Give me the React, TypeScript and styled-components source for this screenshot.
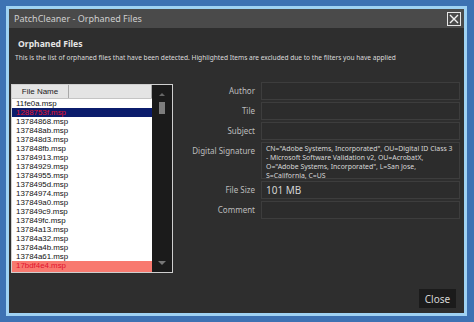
import React from "react";
import styled, { createGlobalStyle } from "styled-components";

const GlobalStyle = createGlobalStyle`
  html, body {
    margin: 0;
    padding: 0;
    background: #3d72b3;
    width: 474px;
    height: 322px;
    overflow: hidden;
  }
  * { box-sizing: border-box; }
`;

const Window = styled.div`
  margin: 6px 0 0 6px;
  width: 461px;
  height: 310px;
  border: 3px solid #9fd2f3;
  background: #2e2e2e;
  display: flex;
  flex-direction: column;
  font-family: "Noto Sans", "Open Sans", sans-serif;
`;

const TitleBar = styled.div`
  height: 19px;
  background: #4a4a4a;
  display: flex;
  align-items: center;
  justify-content: space-between;
  padding: 0 3px 0 5px;
  color: #cfcfcf;
  font-size: 9px;
`;

const CloseX = styled.div`
  width: 14px;
  height: 14px;
  border: 1px solid #e6e6e6;
  display: flex;
  align-items: center;
  justify-content: center;
`;

const Body = styled.div`
  flex: 1;
  display: flex;
  flex-direction: column;
  padding-top: 10px;
`;

const Heading = styled.div`
  font-weight: bold;
  font-size: 8.6px;
  line-height: 12px;
  color: #e6e6e6;
  padding-left: 9px;
`;

const Subtitle = styled.div`
  font-size: 6.6px;
  line-height: 10px;
  color: #dcdcdc;
  margin-top: 3px;
  padding-left: 6px;
  white-space: nowrap;
`;

const Main = styled.div`
  display: flex;
  margin-top: 19px;
  padding-left: 2px;
`;

const ListBox = styled.div`
  width: 162px;
  height: 189px;
  margin-top: 2px;
  border: 1px solid #cfcfcf;
  background: #fff;
  display: flex;
  overflow: hidden;
`;

const ListInner = styled.div`
  flex: 1;
  display: flex;
  flex-direction: column;
  overflow: hidden;
`;

const HeaderRow = styled.div`
  height: 14px;
  display: flex;
  background: #e4e4e4;
  border-bottom: 1px solid #c4c4c4;
  flex-shrink: 0;
`;

const HeaderCell = styled.div<{ $w?: number }>`
  width: ${p => (p.$w ? `${p.$w}px` : "auto")};
  flex: ${p => (p.$w ? "none" : 1)};
  border-right: 1px solid #a8a8a8;
  font-family: "Liberation Sans", Arial, sans-serif;
  font-size: 8px;
  color: #222;
  display: flex;
  align-items: center;
  justify-content: center;
`;

const Row = styled.div<{ $kind?: "sel" | "excl" }>`
  height: 9px;
  flex-shrink: 0;
  padding-left: 4px;
  font-family: "Liberation Sans", Arial, sans-serif;
  font-size: 7.9px;
  line-height: 9px;
  white-space: nowrap;
  color: ${p => (p.$kind ? "#e3122e" : "#111")};
  background: ${p =>
    p.$kind === "sel" ? "#0b1c6c" : p.$kind === "excl" ? "#f8796f" : "transparent"};
`;

const ScrollBar = styled.div`
  width: 20px;
  background: #1b1b1b;
  display: flex;
  flex-direction: column;
  align-items: center;
  padding-top: 8px;
  position: relative;
`;

const Thumb = styled.div`
  width: 6px;
  height: 12px;
  background: #7d7d7d;
  margin-top: 6px;
`;

const DownArrow = styled.div`
  position: absolute;
  bottom: 7px;
  left: 6px;
  width: 0;
  height: 0;
  border-left: 4px solid transparent;
  border-right: 4px solid transparent;
  border-top: 4px solid #777;
`;

const UpArrow = styled.div`
  width: 0;
  height: 0;
  border-left: 3.5px solid transparent;
  border-right: 3.5px solid transparent;
  border-bottom: 3.5px solid #666;
`;

const Props = styled.div`
  display: grid;
  grid-template-columns: 80px 199px;
  column-gap: 6px;
  row-gap: 2px;
  margin-left: 2px;
  align-content: start;
`;

const Label = styled.div`
  text-align: right;
  font-size: 8px;
  line-height: 18px;
  color: #bdbdbd;
  white-space: nowrap;
`;

const Field = styled.div<{ $h?: number }>`
  height: ${p => p.$h ?? 18}px;
  border: 1px solid #3d3d3d;
  background: #2c2c2c;
  color: #d4d4d4;
  padding: 0 4px;
  display: flex;
  align-items: center;
  font-size: 10px;
`;

const SigField = styled(Field)`
  display: block;
  padding: 1px 4px 0;
  font-size: 6.9px;
  line-height: 9px;
  white-space: nowrap;
  color: #d8d8d8;
`;

const Footer = styled.div`
  margin-top: auto;
  display: flex;
  justify-content: flex-end;
  padding: 0 8px 5px 0;
`;

const CloseButton = styled.button`
  width: 37px;
  height: 19px;
  background: #1b1b1b;
  border: none;
  color: #d6d6d6;
  font-family: "Noto Sans", "Open Sans", sans-serif;
  font-size: 10px;
  padding: 0;
`;

const files: { name: string; kind?: "sel" | "excl" }[] = [
  { name: "11fe0a.msp" },
  { name: "1288753f.msp", kind: "sel" },
  { name: "13784868.msp" },
  { name: "137848ab.msp" },
  { name: "137848d3.msp" },
  { name: "137848fb.msp" },
  { name: "13784913.msp" },
  { name: "13784929.msp" },
  { name: "13784955.msp" },
  { name: "1378495d.msp" },
  { name: "13784974.msp" },
  { name: "137849a0.msp" },
  { name: "137849c9.msp" },
  { name: "137849fc.msp" },
  { name: "13784a13.msp" },
  { name: "13784a32.msp" },
  { name: "13784a4b.msp" },
  { name: "13784a61.msp" },
  { name: "17bdf4e4.msp", kind: "excl" },
  { name: "17bdf4e5.msp", kind: "excl" },
];

export default function App() {
  return (
    <>
      <GlobalStyle />
      <Window>
        <TitleBar>
          <span>PatchCleaner - Orphaned Files</span>
          <CloseX>
            <svg width="10" height="10" viewBox="0 0 10 10">
              <path d="M1 1 L9 9 M9 1 L1 9" stroke="#f0f0f0" strokeWidth="1.4" />
            </svg>
          </CloseX>
        </TitleBar>
        <Body>
          <Heading>Orphaned Files</Heading>
          <Subtitle>
            This is the list of orphaned files that have been detected. Highlighted Items are excluded due to the filters you have applied
          </Subtitle>
          <Main>
            <ListBox>
              <ListInner>
                <HeaderRow>
                  <HeaderCell $w={57}>File Name</HeaderCell>
                  <HeaderCell />
                </HeaderRow>
                {files.map(f => (
                  <Row key={f.name} $kind={f.kind}>{f.name}</Row>
                ))}
              </ListInner>
              <ScrollBar>
                <UpArrow />
                <Thumb />
                <DownArrow />
              </ScrollBar>
            </ListBox>
            <Props>
              <Label>Author</Label>
              <Field />
              <Label>Tile</Label>
              <Field />
              <Label>Subject</Label>
              <Field />
              <Label>Digital Signature</Label>
              <SigField $h={37}>
                CN="Adobe Systems, Incorporated", OU=Digital ID Class 3<br />
                - Microsoft Software Validation v2, OU=AcrobatX,<br />
                O="Adobe Systems, Incorporated", L=San Jose,<br />
                S=California, C=US
              </SigField>
              <Label>File Size</Label>
              <Field>101 MB</Field>
              <Label>Comment</Label>
              <Field />
            </Props>
          </Main>
          <Footer>
            <CloseButton>Close</CloseButton>
          </Footer>
        </Body>
      </Window>
    </>
  );
}
